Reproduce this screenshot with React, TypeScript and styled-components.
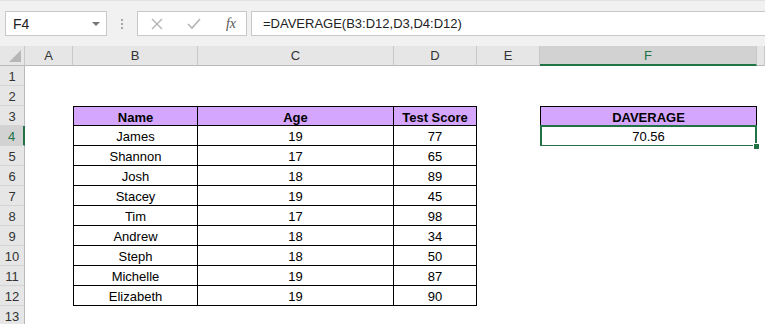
import React from 'react';
import styled, { createGlobalStyle, css } from 'styled-components';

const GlobalStyle = createGlobalStyle`
  body {
    margin: 0;
    background: #fff;
    font-family: "Liberation Sans", Arial, sans-serif;
  }
`;

const green = '#217346';

const Window = styled.div`
  width: 765px;
  height: 324px;
  overflow: hidden;
  background: #fff;
`;

const FormulaBar = styled.div`
  display: flex;
  align-items: center;
  height: 46px;
  padding: 0 0 0 5px;
  box-sizing: border-box;
  background: #f1f1f1;
  border-top: 1px solid #e2e2e2;
`;

const NameBox = styled.div`
  display: flex;
  align-items: center;
  justify-content: space-between;
  width: 102px;
  height: 25px;
  box-sizing: border-box;
  padding: 0 6px 0 7px;
  background: #fff;
  border: 1px solid #c8c8c8;
  font-size: 14px;
  color: #222;
`;

const Caret = styled.span`
  width: 0;
  height: 0;
  border-left: 4px solid transparent;
  border-right: 4px solid transparent;
  border-top: 4px solid #777;
`;

const Grip = styled.div`
  display: flex;
  flex-direction: column;
  gap: 2px;
  width: 30px;
  align-items: center;
`;

const GripDot = styled.span`
  width: 2px;
  height: 2px;
  background: #a8a8a8;
`;

const ButtonsBox = styled.div`
  display: flex;
  align-items: center;
  justify-content: space-between;
  width: 110px;
  height: 25px;
  box-sizing: border-box;
  padding: 0 10px 0 13px;
  background: #fff;
  border: 1px solid #c8c8c8;
`;

const Fx = styled.span`
  font-family: "Liberation Serif", "Times New Roman", serif;
  font-style: italic;
  font-size: 14px;
  color: #555;
`;

const FormulaInput = styled.div`
  flex: 1;
  display: flex;
  align-items: center;
  height: 25px;
  margin-left: 4px;
  padding-left: 11px;
  box-sizing: border-box;
  background: #fff;
  border: 1px solid #c8c8c8;
  border-right: none;
  font-size: 13px;
  color: #222;
`;

const Sheet = styled.div`
  display: grid;
  grid-template-columns: 25px 48px 125px 196px 83px 63px 217px 1fr;
  grid-auto-rows: 20px;
`;

const Corner = styled.div`
  position: relative;
  background: #e6e6e6;
  border-right: 1px solid #c9c9c9;
  border-bottom: 1px solid #b9b9b9;
  box-sizing: border-box;
  &::after {
    content: '';
    position: absolute;
    right: 3px;
    bottom: 3px;
    border-left: 12px solid transparent;
    border-bottom: 12px solid #b7b7b7;
  }
`;

const ColHead = styled.div<{ $active?: boolean }>`
  display: flex;
  align-items: center;
  justify-content: center;
  box-sizing: border-box;
  background: ${p => (p.$active ? '#d2d2d2' : '#e6e6e6')};
  color: ${p => (p.$active ? green : '#333')};
  border-right: 1px solid #c9c9c9;
  border-bottom: ${p => (p.$active ? `2px solid ${green}` : '1px solid #b9b9b9')};
  font-size: 13px;
`;

const RowHead = styled.div<{ $active?: boolean }>`
  display: flex;
  align-items: center;
  justify-content: center;
  box-sizing: border-box;
  padding-top: 2px;
  background: ${p => (p.$active ? '#d2d2d2' : '#e6e6e6')};
  color: ${p => (p.$active ? green : '#333')};
  border-right: ${p => (p.$active ? `2px solid ${green}` : '1px solid #b9b9b9')};
  border-bottom: 1px solid #d3d3d3;
  font-size: 13px;
`;

const Cell = styled.div<{ $boxed?: boolean; $left?: boolean; $top?: boolean; $head?: boolean; $selected?: boolean }>`
  position: relative;
  display: flex;
  align-items: center;
  justify-content: center;
  box-sizing: border-box;
  padding-top: 2px;
  font-size: 13px;
  color: #000;
  background: ${p => (p.$head ? '#d4a6fd' : '#fff')};
  font-weight: ${p => (p.$head ? 700 : 400)};
  ${p =>
    p.$boxed &&
    css`
      border-right: 1px solid #000;
      border-bottom: 1px solid #000;
      ${p.$left && 'border-left: 1px solid #000;'}
      ${p.$top && 'border-top: 1px solid #000;'}
    `}
  ${p =>
    p.$selected &&
    css`
      &::after {
        content: '';
        position: absolute;
        left: -1px;
        top: -1px;
        right: -1px;
        bottom: -2px;
        border: 2px solid ${green};
      }
      &::before {
        content: '';
        position: absolute;
        right: -4px;
        bottom: -5px;
        width: 5px;
        height: 5px;
        background: ${green};
        border: 1px solid #fff;
        z-index: 2;
      }
    `}
`;

const columns = ['A', 'B', 'C', 'D', 'E', 'F'];

const table = [
  ['Name', 'Age', 'Test Score'],
  ['James', '19', '77'],
  ['Shannon', '17', '65'],
  ['Josh', '18', '89'],
  ['Stacey', '19', '45'],
  ['Tim', '17', '98'],
  ['Andrew', '18', '34'],
  ['Steph', '18', '50'],
  ['Michelle', '19', '87'],
  ['Elizabeth', '19', '90'],
];

function cellFor(row: number, col: string) {
  if (row >= 3 && row <= 12 && ['B', 'C', 'D'].includes(col)) {
    const ci = ['B', 'C', 'D'].indexOf(col);
    return (
      <Cell key={col + row} $boxed $left={col === 'B'} $top={row === 3} $head={row === 3}>
        {table[row - 3][ci]}
      </Cell>
    );
  }
  if (col === 'F' && row === 3) {
    return (
      <Cell key={col + row} $boxed $left $top $head>
        DAVERAGE
      </Cell>
    );
  }
  if (col === 'F' && row === 4) {
    return (
      <Cell key={col + row} $boxed $left $selected>
        70.56
      </Cell>
    );
  }
  return <Cell key={col + row} />;
}

const App: React.FC = () => {
  const rows = Array.from({ length: 13 }, (_, i) => i + 1);
  return (
    <Window>
      <GlobalStyle />
      <FormulaBar>
        <NameBox>
          F4
          <Caret />
        </NameBox>
        <Grip>
          <GripDot />
          <GripDot />
          <GripDot />
        </Grip>
        <ButtonsBox>
          <svg width="12" height="12" viewBox="0 0 12 12">
            <path d="M1 1 L11 11 M11 1 L1 11" stroke="#b4b4b4" strokeWidth="1.4" fill="none" />
          </svg>
          <svg width="14" height="12" viewBox="0 0 14 12">
            <path d="M1 6 L5 10 L13 1" stroke="#b4b4b4" strokeWidth="1.6" fill="none" />
          </svg>
          <Fx>fx</Fx>
        </ButtonsBox>
        <FormulaInput>=DAVERAGE(B3:D12,D3,D4:D12)</FormulaInput>
      </FormulaBar>
      <Sheet>
        <Corner />
        {columns.map(c => (
          <ColHead key={c} $active={c === 'F'}>
            {c}
          </ColHead>
        ))}
        <ColHead />
        {rows.map(r => (
          <React.Fragment key={r}>
            <RowHead $active={r === 4}>{r}</RowHead>
            {columns.map(c => cellFor(r, c))}
            <Cell />
          </React.Fragment>
        ))}
      </Sheet>
    </Window>
  );
};

export default App;
